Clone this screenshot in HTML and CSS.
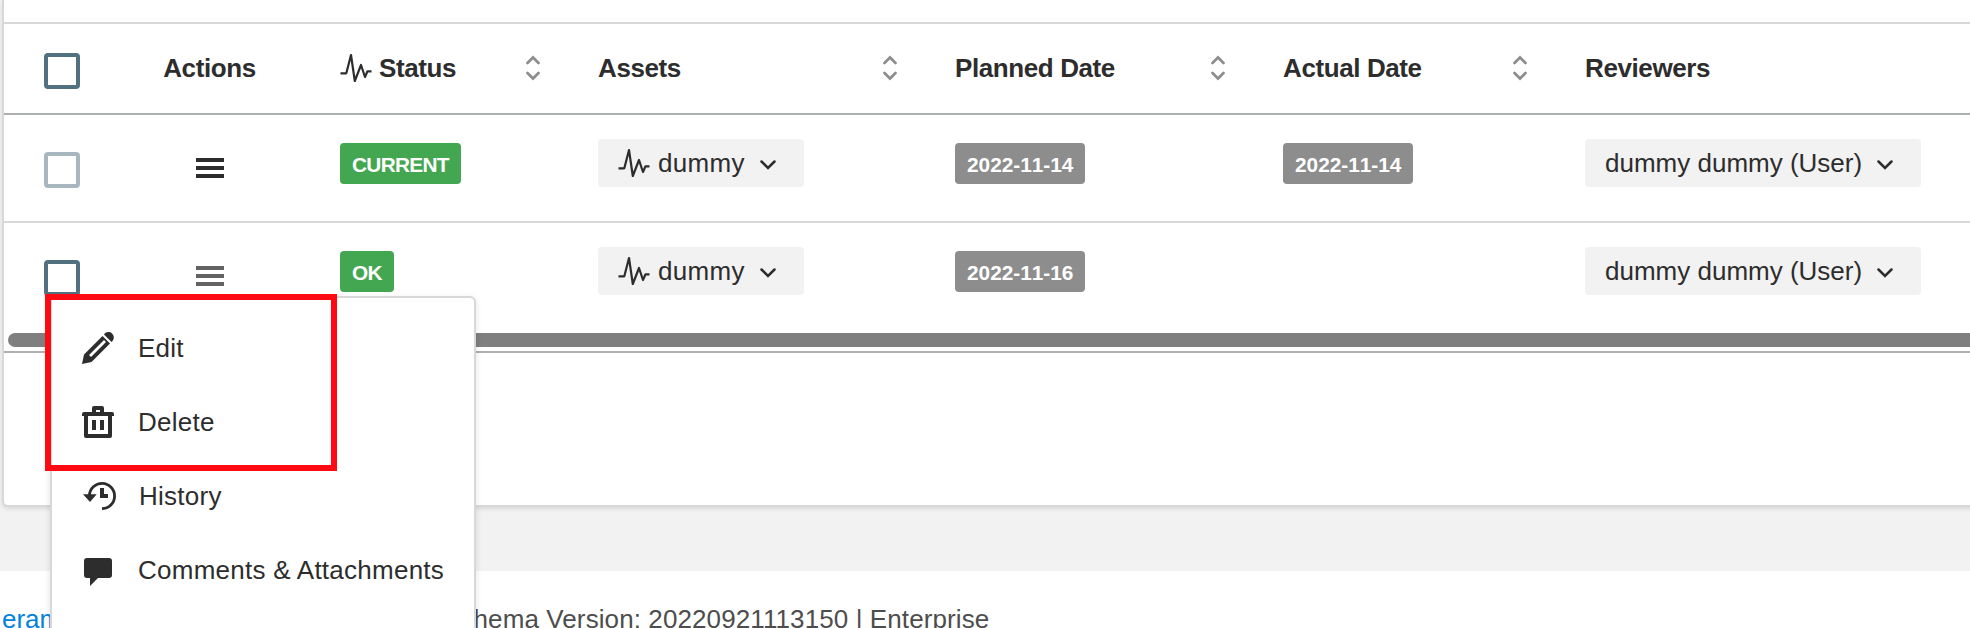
FILE: index.html
```html
<!DOCTYPE html>
<html lang="en">
<head>
    <meta charset="UTF-8">
    <meta name="viewport" content="width=device-width, initial-scale=1.0">
    <title>Reviews</title>
    <link rel="stylesheet" href="styles.css">
</head>
<body>
    <svg class="sprite">
        <symbol id="pulse" viewBox="0 0 32 30">
            <path d="M0.5 20.300H6.300L11 2L14.800 28L21 12L25 24L27.500 18.300H31.500" fill="none" stroke="currentColor" stroke-width="2.200" stroke-linejoin="round"/>
        </symbol>
        <symbol id="sort" viewBox="0 0 14 26">
            <path d="M1.500 8L7 2.500L12.500 8M1.500 18L7 23.500L12.500 18" fill="none" stroke="currentColor" stroke-width="2.700" stroke-linecap="round"/>
        </symbol>
        <symbol id="chevron" viewBox="0 0 16 10">
            <path d="M1.500 1.500L8 8L14.500 1.500" fill="none" stroke="currentColor" stroke-width="2.500" stroke-linecap="round"/>
        </symbol>
        <symbol id="bars" viewBox="0 0 28 20">
            <path d="M0 0H28V4H0ZM0 8H28V12H0ZM0 16H28V20H0Z" fill="currentColor"/>
        </symbol>
    </svg>

    <div class="card">
        <table class="reviews">
            <colgroup>
                <col class="col-check">
                <col class="col-actions">
                <col class="col-status">
                <col class="col-assets">
                <col class="col-planned">
                <col class="col-actual">
                <col>
            </colgroup>
            <thead>
                <tr>
                    <th><span class="checkbox"></span></th>
                    <th class="center">Actions</th>
                    <th><div class="head"><svg class="pulse"><use href="#pulse"/></svg><span>Status</span><svg class="sort"><use href="#sort"/></svg></div></th>
                    <th><div class="head"><span>Assets</span><svg class="sort"><use href="#sort"/></svg></div></th>
                    <th><div class="head"><span>Planned Date</span><svg class="sort"><use href="#sort"/></svg></div></th>
                    <th><div class="head"><span>Actual Date</span><svg class="sort"><use href="#sort"/></svg></div></th>
                    <th>Reviewers</th>
                </tr>
            </thead>
            <tbody>
                <tr>
                    <td class="check"><span class="checkbox disabled"></span></td>
                    <td class="action"><svg class="bars"><use href="#bars"/></svg></td>
                    <td><span class="label success">CURRENT</span></td>
                    <td class="chips"><span class="chip asset"><svg class="pulse"><use href="#pulse"/></svg>dummy<svg class="chevron"><use href="#chevron"/></svg></span></td>
                    <td><span class="label">2022-11-14</span></td>
                    <td><span class="label">2022-11-14</span></td>
                    <td class="chips"><span class="chip">dummy dummy (User)<svg class="chevron"><use href="#chevron"/></svg></span></td>
                </tr>
                <tr>
                    <td class="check"><span class="checkbox"></span></td>
                    <td class="action"><svg class="bars open"><use href="#bars"/></svg></td>
                    <td><span class="label success">OK</span></td>
                    <td class="chips"><span class="chip asset"><svg class="pulse"><use href="#pulse"/></svg>dummy<svg class="chevron"><use href="#chevron"/></svg></span></td>
                    <td><span class="label">2022-11-16</span></td>
                    <td></td>
                    <td class="chips"><span class="chip">dummy dummy (User)<svg class="chevron"><use href="#chevron"/></svg></span></td>
                </tr>
            </tbody>
        </table>
        <div class="scroll"><div class="thumb"></div></div>
    </div>

    <footer>
        <a href="#">eramba</a>
        <span class="version">Schema Version: 20220921113150 | Enterprise</span>
    </footer>

    <ul class="menu">
        <li>
            <svg viewBox="0 0 32 32"><path fill="currentColor" fill-rule="evenodd" d="M0 32L2 22.500L20.500 4L28 11.500L9.500 30ZM7 23L9 25L24 10L22 8Z"/><path fill="currentColor" d="M22 2.500C24 -0.500 28 -0.500 30 1.500C32.500 4 32.500 7.500 29.500 10Z"/></svg>
            <span>Edit</span>
        </li>
        <li>
            <svg viewBox="0 0 32 32"><path fill="currentColor" fill-rule="evenodd" d="M0 10V8Q0 6 2 6H10V2Q10 0 12 0H20Q22 0 22 2V6H30Q32 6 32 8V10H30V30Q30 32 28 32H4Q2 32 2 30V10ZM14 4V6H18V4ZM6 10V28H26V10ZM10 14H14V24H10ZM18 14H22V24H18Z"/></svg>
            <span>Delete</span>
        </li>
        <li class="history">
            <svg viewBox="0 0 32 32"><path fill="none" stroke="currentColor" stroke-width="2.800" d="M6.400 15.500A12.600 12.600 0 1 1 19 28.600"/><path fill="currentColor" d="M0 14.300H13.700L7 22ZM17 8H21V14H25V18H17Z"/></svg>
            <span>History</span>
        </li>
        <li>
            <svg viewBox="0 0 32 32"><path fill="currentColor" d="M5 4H27Q30 4 30 7V21Q30 24 27 24H16L8 32V24H5Q2 24 2 21V7Q2 4 5 4Z"/></svg>
            <span>Comments &amp; Attachments</span>
        </li>
    </ul>

    <div class="highlight"></div>
</body>
</html>
```

FILE: styles.css
```css
* {
    box-sizing: border-box;
}
body {
    margin: 0;
    height: 628px;
    overflow: hidden;
    background-color: #f2f2f2;
    color: #2d2d2d;
    font-family: "Liberation Sans", Arial, sans-serif;
    font-size: 26px;
    line-height: 30px;
}
svg {
    display: block;
    flex: none;
    overflow: visible;
}
.sprite {
    display: none;
}

/* table card */
.card {
    width: 2000px;
    height: 507px;
    margin-left: 2px;
    padding-top: 22px;
    background-color: white;
    border: 2px solid #d8d8d8;
    border-top: none;
    border-radius: 0 0 6px 6px;
    box-shadow: 0 2px 4px rgba(0, 0, 0, 0.1);
}
.reviews {
    width: 100%;
    table-layout: fixed;
    border-spacing: 0;
    border-top: 2px solid #d8d8d8;
}
.col-check { width: 103px; }
.col-actions { width: 205px; }
.col-status { width: 258px; }
.col-assets { width: 357px; }
.col-planned { width: 328px; }
.col-actual { width: 302px; }
th {
    height: 91px;
    padding: 29px 30px 0 28px;
    text-align: left;
    vertical-align: top;
    letter-spacing: -0.4px;
    border-bottom: 2px solid #adb0b0;
}
td {
    height: 108px;
    padding: 28px 28px 0;
    vertical-align: top;
    border-bottom: 2px solid #d8d8d8;
}
th:first-child, td:first-child {
    padding-left: 40px;
}
tbody tr:last-child td {
    border-bottom: none;
}
th.center {
    padding-right: 28px;
    text-align: center;
}
td.check {
    padding-top: 37px;
}
td.action {
    padding-top: 43px;
}
td.chips {
    padding-top: 24px;
}
.head {
    display: flex;
    align-items: center;
    height: 30px;
}
.checkbox {
    display: block;
    width: 36px;
    height: 36px;
    border: 4px solid #517080;
    border-radius: 4px;
}
.checkbox.disabled {
    border-color: #a8b7bf;
}
.pulse {
    width: 32px;
    height: 30px;
    margin-right: 7px;
}
.sort {
    width: 14px;
    height: 26px;
    margin-left: auto;
    color: #8d8d8d;
}
.bars {
    width: 28px;
    height: 20px;
    margin: 0 auto;
}
.bars.open {
    color: #636363;
}
.label {
    display: inline-block;
    height: 41px;
    padding: 0 12px;
    background-color: #8d8d8d;
    border-radius: 4px;
    color: white;
    font-size: 20.8px;
    font-weight: bold;
    line-height: 44px;
    font-kerning: none;
    vertical-align: top;
}
.label.success {
    background-color: #43a651;
    letter-spacing: -0.7px;
}
.chip {
    display: inline-flex;
    align-items: center;
    height: 48px;
    padding: 0 28px 0 20px;
    background-color: #f2f2f2;
    border-radius: 4px;
    vertical-align: top;
}
.asset {
    letter-spacing: 0.3px;
}
.asset .pulse {
    margin-right: 8px;
}
.chevron {
    width: 16px;
    height: 10px;
    margin: 3px 0 0 15px;
}
.scroll {
    height: 22px;
    padding: 2px 0 0 4px;
    border-bottom: 2px solid #adb0b0;
}
.thumb {
    height: 14px;
    background-color: #7f7f7f;
    border-radius: 7px;
}

footer {
    display: flex;
    height: 57px;
    margin-top: 64px;
    padding: 33px 0 0 2px;
    background-color: white;
    color: #4d4d4d;
}
footer a {
    width: 441px;
    color: #0083e0;
    text-decoration: none;
}
.version {
    letter-spacing: 0.1px;
    white-space: nowrap;
}

/* dropdown over the table */
.menu {
    position: absolute;
    top: 296px;
    left: 50px;
    width: 426px;
    height: 332px;
    margin: 0;
    padding: 13px 0 0 30px;
    list-style: none;
    background-color: white;
    border: 2px solid #d8d8d8;
    border-bottom: none;
    border-radius: 6px 6px 0 0;
    box-shadow: 0 2px 6px rgba(0, 0, 0, 0.12);
    letter-spacing: 0.25px;
}
.menu li {
    display: flex;
    align-items: center;
    gap: 24px;
    height: 74px;
}
.menu svg {
    width: 32px;
    height: 32px;
}
.menu .history {
    padding-left: 1px;
}
.highlight {
    position: absolute;
    top: 294px;
    left: 45px;
    width: 292px;
    height: 177px;
    border: 6px solid #ff0a12;
}
```
